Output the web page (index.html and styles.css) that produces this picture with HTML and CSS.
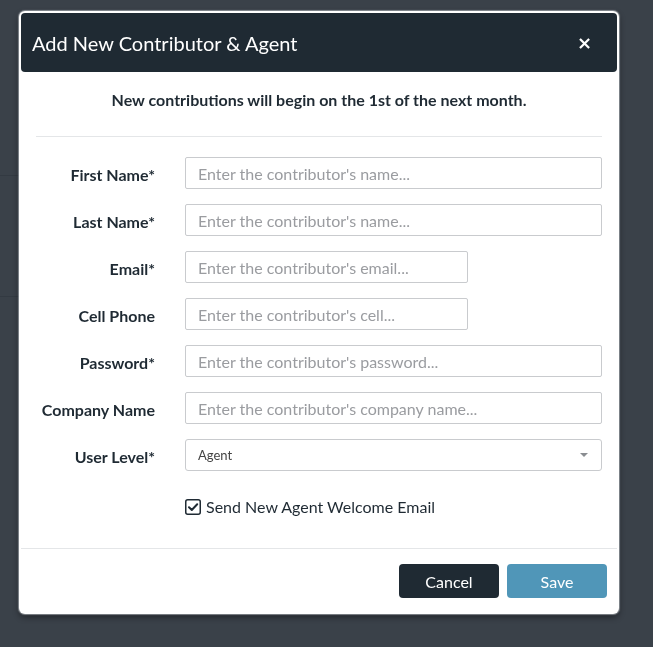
FILE: index.html
```html
<!DOCTYPE html>
<html lang="en">
<head>
    <meta charset="UTF-8">
    <meta name="viewport" content="width=device-width, initial-scale=1.0">
    <link rel="stylesheet" href="styles.css">
    <title>Add New Contributor &amp; Agent</title>
</head>
<body>
    <div class="page">
        <div class="page-row"></div>
        <div class="page-row"></div>
    </div>

    <div class="backdrop">
        <div class="modal">
            <div class="modal-header">
                <h4 class="modal-title">Add New Contributor &amp; Agent</h4>
                <button class="close" type="button">&times;</button>
            </div>
            <div class="modal-body">
                <p class="notice">New contributions will begin on the 1st of the next month.</p>
                <hr class="divider">
                <form class="form">
                    <label class="form-label" for="first">First Name*</label>
                    <input class="form-control" id="first" type="text" placeholder="Enter the contributor's name...">

                    <label class="form-label" for="last">Last Name*</label>
                    <input class="form-control" id="last" type="text" placeholder="Enter the contributor's name...">

                    <label class="form-label" for="email">Email*</label>
                    <input class="form-control short" id="email" type="text" placeholder="Enter the contributor's email...">

                    <label class="form-label" for="cell">Cell Phone</label>
                    <input class="form-control short" id="cell" type="text" placeholder="Enter the contributor's cell...">

                    <label class="form-label" for="pass">Password*</label>
                    <input class="form-control" id="pass" type="text" placeholder="Enter the contributor's password...">

                    <label class="form-label" for="company">Company Name</label>
                    <input class="form-control" id="company" type="text" placeholder="Enter the contributor's company name...">

                    <label class="form-label" for="level">User Level*</label>
                    <div class="select" id="level">
                        <span>Agent</span>
                        <span class="caret"></span>
                    </div>

                    <div class="check">
                        <svg class="check-box" width="16" height="16" viewBox="0 0 16 16">
                            <rect x="0.75" y="0.75" width="14.5" height="14.5" rx="2" fill="#fff" stroke="#1f2a33" stroke-width="1.5"/>
                            <path d="M4 8.2 L6.8 11 L12.2 5.2" fill="none" stroke="#1f2a33" stroke-width="2" stroke-linecap="round" stroke-linejoin="round"/>
                        </svg>
                        <span>Send New Agent Welcome Email</span>
                    </div>
                </form>
            </div>
            <div class="modal-footer">
                <button class="btn btn-dark" type="button">Cancel</button>
                <button class="btn btn-primary" type="button">Save</button>
            </div>
        </div>
    </div>
</body>
</html>
```

FILE: styles.css
```css
body {
    margin: 0;
    background: #3a4149;
    font-family: Lato, "Open Sans", sans-serif;
    color: #1f2a33;
}
.page {
    width: 300px;
    padding-top: 175px;
}
.page-row {
    height: 120px;
    border-top: 1px solid #333a42;
}
.backdrop {
    position: fixed;
    inset: 0;
    padding: 11px 0 0 19px;
}
.modal {
    width: 596px;
    padding: 2px;
    background: #fff;
    border-radius: 6px;
    box-shadow: 0 0 1px 1px rgba(190, 195, 200, .6), 0 3px 6px rgba(0, 0, 0, .45);
}
.modal-header {
    display: flex;
    align-items: center;
    justify-content: space-between;
    height: 59px;
    padding: 0 25px 0 11px;
    background: #1f2a33;
    border-radius: 4px;
    color: #fff;
}
.modal-title {
    margin: 0;
    font-size: 20px;
    font-weight: 400;
}
.close {
    border: none;
    background: transparent;
    color: #fff;
    font-family: "DejaVu Sans", sans-serif;
    font-size: 18px;
    font-weight: 700;
    padding: 0;
    line-height: 1;
}
.modal-body {
    padding: 18px 15px 31px;
    border-bottom: 1px solid #e4e6e8;
}
.notice {
    margin: 0;
    text-align: center;
    font-size: 16px;
    font-weight: 700;
    line-height: 20px;
}
.divider {
    border: none;
    border-top: 1px solid #e4e6e8;
    margin: 26px 0 20px;
}
.form {
    display: grid;
    grid-template-columns: 119px 1fr;
    column-gap: 30px;
    row-gap: 15px;
    align-items: start;
}
.form-label {
    padding-top: 8px;
    text-align: right;
    font-size: 16px;
    line-height: 20px;
    font-weight: 700;
}
.form-control {
    box-sizing: border-box;
    height: 32px;
    width: 100%;
    border: 1px solid #c9cbce;
    border-radius: 2px;
    padding: 0 12px;
    font-family: Lato, sans-serif;
    font-size: 16px;
    color: #333;
}
.form-control::placeholder {
    color: #9a9ca0;
}
.form-control.short {
    width: 283px;
}
.select {
    box-sizing: border-box;
    height: 32px;
    display: flex;
    align-items: center;
    justify-content: space-between;
    border: 1px solid #c9cbce;
    border-radius: 3px;
    padding: 0 13px 0 12px;
    font-size: 13px;
    color: #444;
}
.caret {
    width: 0;
    height: 0;
    border-left: 4px solid transparent;
    border-right: 4px solid transparent;
    border-top: 4px solid #8a8d91;
}
.check {
    grid-column: 2;
    display: flex;
    align-items: center;
    gap: 5px;
    margin-top: 11px;
    font-size: 16px;
    line-height: 20px;
}
.check-box {
    display: block;
}
.modal-footer {
    display: flex;
    justify-content: flex-end;
    gap: 8px;
    padding: 15px 10px 14px;
}
.btn {
    width: 100px;
    height: 34px;
    border: none;
    border-radius: 4px;
    font-family: Lato, sans-serif;
    font-size: 16px;
    color: #fff;
}
.btn-dark {
    background: #1f2a33;
}
.btn-primary {
    background: #5096b8;
}
```
